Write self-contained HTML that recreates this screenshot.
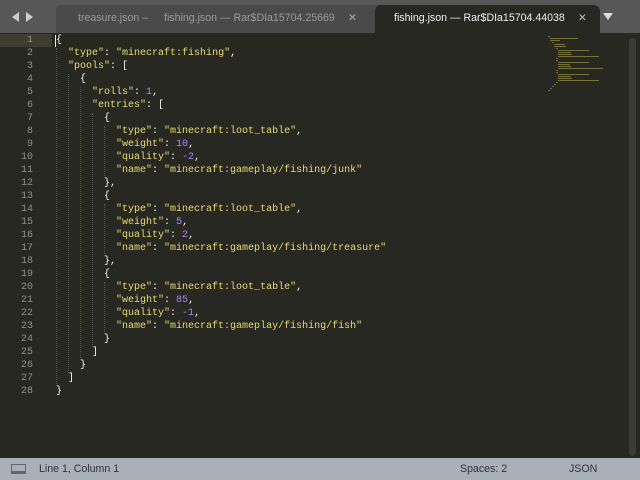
<!DOCTYPE html><html><head><style>
body{margin:0;width:640px;height:480px;background:#272822;overflow:hidden;position:relative;font-family:"Liberation Mono",monospace}
.tabbar{position:absolute;left:0;top:0;width:640px;height:33px;background:#575757}
.tab{position:absolute;top:5px;height:28px;font:10.6px "Liberation Sans",sans-serif;line-height:27px;white-space:nowrap}
.code{position:absolute;left:0;top:35px;width:625px}
.ln{position:absolute;left:0;width:33px;text-align:right;color:#8f908a;font-size:10px}
.c{position:absolute;left:56px;white-space:pre;font-size:10px;color:#f8f8f2}
.s{color:#e6db74}.n{color:#ae81ff}
.status{position:absolute;left:0;top:458px;width:640px;height:22px;background:#a9b0b8;font:10.6px "Liberation Sans",sans-serif;color:#333;line-height:22px}
.g{position:absolute;width:0;border-left:1px dotted #555}
.mm{position:absolute;height:1px;background:#8a8540;opacity:.8}
</style></head><body>
<div class="tabbar">
<div style="position:absolute;left:12px;top:12px;width:0;height:0;border-top:5px solid transparent;border-bottom:5px solid transparent;border-right:7px solid #ccc"></div>
<div style="position:absolute;left:26px;top:12px;width:0;height:0;border-top:5px solid transparent;border-bottom:5px solid transparent;border-left:7px solid #ccc"></div>
<div class="tab" style="left:56px;width:330px;background:#4a4a4a;border-radius:6px 6px 0 0;color:#9a9a9a"><span style="position:absolute;left:22px">treasure.json –</span><span style="position:absolute;left:108px">fishing.json — Rar$DIa15704.25669</span><span style="position:absolute;left:292px;color:#aaa">✕</span></div>
<div class="tab" style="left:375px;width:225px;background:#272822;border-radius:6px 6px 0 0;color:#eee"><span style="position:absolute;left:19px">fishing.json — Rar$DIa15704.44038</span><span style="position:absolute;left:203px;color:#bbb">✕</span></div>
<div style="position:absolute;left:603px;top:13px;width:0;height:0;border-left:5px solid transparent;border-right:5px solid transparent;border-top:7px solid #ddd"></div>
</div>
<div style="position:absolute;left:0;top:34px;width:52px;height:13px;background:#3e3d32"></div>
<div style="position:absolute;left:629px;top:38px;width:7px;height:418px;background:#3a3a36;border-radius:3px"></div>
<div id="mm"></div>
<div class="code" id="code"></div>
<div class="status"><span style="position:absolute;left:11px;top:6px;width:15px;height:10px;border:1px solid #666;border-bottom:3px solid #666;box-sizing:border-box"></span><span style="position:absolute;left:39px">Line 1, Column 1</span><span style="position:absolute;left:460px">Spaces: 2</span><span style="position:absolute;left:569px">JSON</span></div>
<script>
var L=['{','  <s>"type"</s>: <s>"minecraft:fishing"</s>,','  <s>"pools"</s>: [','    {','      <s>"rolls"</s>: <n>1</n>,','      <s>"entries"</s>: [','        {',
'          <s>"type"</s>: <s>"minecraft:loot_table"</s>,','          <s>"weight"</s>: <n>10</n>,','          <s>"quality"</s>: <n>-2</n>,','          <s>"name"</s>: <s>"minecraft:gameplay/fishing/junk"</s>','        },','        {',
'          <s>"type"</s>: <s>"minecraft:loot_table"</s>,','          <s>"weight"</s>: <n>5</n>,','          <s>"quality"</s>: <n>2</n>,','          <s>"name"</s>: <s>"minecraft:gameplay/fishing/treasure"</s>','        },','        {',
'          <s>"type"</s>: <s>"minecraft:loot_table"</s>,','          <s>"weight"</s>: <n>85</n>,','          <s>"quality"</s>: <n>-1</n>,','          <s>"name"</s>: <s>"minecraft:gameplay/fishing/fish"</s>','        }','      ]','    }','  ]','}'];
var h='',m='';
L.forEach(function(t,i){var y=i*13;
var raw=t.replace(/<\/?[sn]>/g,''),ind=raw.search(/\S/),len=raw.length-ind;
if(len>2)m+='<div class="mm" style="left:'+(548+ind)+'px;top:'+(36+i*2)+'px;width:'+len+'px"></div>';
else m+='<div class="mm" style="left:'+(548+ind)+'px;top:'+(36+i*2)+'px;width:2px;background:#777"></div>';
t=t.replace(/<s>/g,'<span class="s">').replace(/<\/s>/g,'</span>').replace(/<n>/g,'<span class="n">').replace(/<\/n>/g,'</span>');
h+='<div class="ln" style="top:'+y+'px">'+(i+1)+'</div><div class="c" style="top:'+y+'px">'+t+'</div>';});
[[56,1,27],[68,3,26],[80,4,25],[92,6,24],[104,7,11],[104,13,17],[104,19,23]].forEach(function(g){h+='<div class="g" style="left:'+g[0]+'px;top:'+(g[1]*13)+'px;height:'+((g[2]-g[1])*13)+'px"></div>';});
h+='<div style="position:absolute;left:55px;top:0px;width:1px;height:12px;background:#f8f8f2"></div>';
document.getElementById('code').innerHTML=h;
document.getElementById('mm').innerHTML=m;
</script>
</body></html>
